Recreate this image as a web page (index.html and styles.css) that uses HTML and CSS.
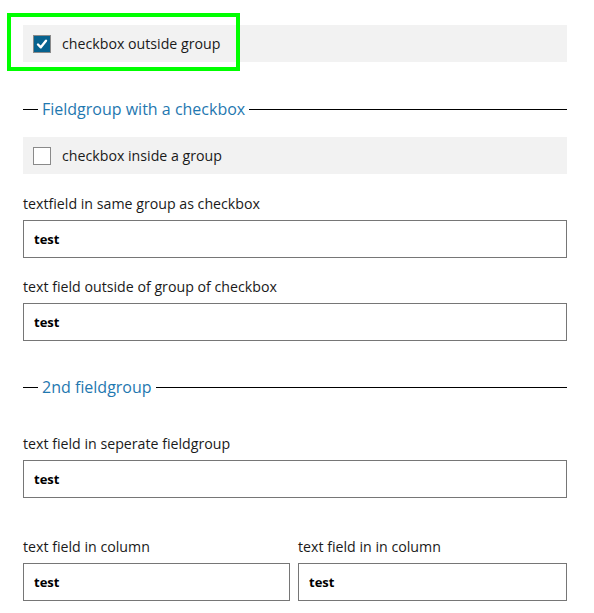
FILE: index.html
```html
<!DOCTYPE html>
<html lang="en">
<head>
    <meta charset="UTF-8">
    <meta name="viewport" content="width=device-width, initial-scale=1.0">
    <title>Fieldgroups</title>
    <link rel="stylesheet" href="styles.css">
</head>
<body>
    <div class="form">
        <div class="checkbox-row focused">
            <span class="box checked">
                <svg width="12" height="12" viewBox="0 0 12 12"><path d="M2 6.5 L4.8 9.3 L10 2.8" fill="none" stroke="#fff" stroke-width="2.4" stroke-linecap="round" stroke-linejoin="round"/></svg>
            </span>
            <span class="check-label">checkbox outside group</span>
            <div class="focus-ring"></div>
        </div>

        <fieldset class="group first">
            <legend>Fieldgroup with a checkbox</legend>
            <div class="checkbox-row">
                <span class="box"></span>
                <span class="check-label">checkbox inside a group</span>
            </div>
            <div class="field">
                <label>textfield in same group as checkbox</label>
                <input type="text" value="test">
            </div>
        </fieldset>

        <div class="field">
            <label>text field outside of group of checkbox</label>
            <input type="text" value="test">
        </div>

        <fieldset class="group second">
            <legend>2nd fieldgroup</legend>
            <div class="field">
                <label>text field in seperate fieldgroup</label>
                <input type="text" value="test">
            </div>
        </fieldset>

        <div class="columns">
            <div class="field">
                <label>text field in column</label>
                <input type="text" value="test">
            </div>
            <div class="field">
                <label>text field in in column</label>
                <input type="text" value="test">
            </div>
        </div>
    </div>
</body>
</html>
```

FILE: styles.css
```css
body {
    font-family: "Open Sans", "Noto Sans", sans-serif;
    margin: 0;
    padding: 25px 0 0 23px;
    color: #1a1a1a;
    background: #fff;
}
.form {
    width: 544px;
}
.checkbox-row {
    position: relative;
    display: flex;
    align-items: center;
    gap: 11px;
    height: 37px;
    padding-left: 10px;
    background: #f2f2f2;
    font-size: 14.2px;
}
.box {
    width: 18px;
    height: 18px;
    box-sizing: border-box;
    border: 1px solid #8a8a8a;
    background: #fff;
    display: flex;
    align-items: center;
    justify-content: center;
}
.box.checked {
    background: #06628f;
}
.focus-ring {
    position: absolute;
    left: -16px;
    top: -12px;
    width: 233px;
    height: 58px;
    box-sizing: border-box;
    border: 4px solid #00ff00;
}
.group {
    border: none;
    border-top: 1px solid #000;
    margin: 0;
    padding: 0;
    min-width: 0;
}
.group legend {
    margin-left: 15px;
    padding: 0 4px;
    font-size: 16px;
    line-height: 24px;
    color: #1f78b0;
}
.group.first {
    margin-top: 35px;
}
.group.first .checkbox-row {
    margin-top: 16px;
    margin-bottom: 20px;
}
.group.second {
    margin-top: 34px;
}
.group.second .field {
    margin-top: 35px;
}
.field {
    margin-bottom: 19px;
}
.field label {
    display: block;
    font-size: 14.2px;
    line-height: 20px;
    margin-bottom: 6px;
}
.field input {
    display: block;
    width: 100%;
    height: 38px;
    box-sizing: border-box;
    border: 1px solid #767676;
    padding: 0 10px;
    font-family: inherit;
    font-size: 13px;
    font-weight: bold;
    color: #000;
    background: #fff;
}
.columns {
    display: grid;
    grid-template-columns: 267px 269px;
    gap: 8px;
    margin-top: 20px;
}
```
